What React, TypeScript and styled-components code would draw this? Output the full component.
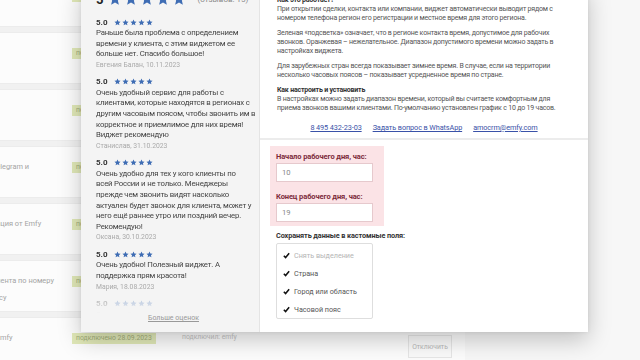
import styled, { createGlobalStyle } from "styled-components";

const GlobalStyle = createGlobalStyle`
  html, body { margin: 0; padding: 0; }
  body { font-family: Roboto, "Liberation Sans", sans-serif; }
`;

const rows = [
  { name: "Сделки" },
  { name: "Виджет чата" },
  { name: "Поиск дублей" },
  { name: "Отправка сообщений в Telegram и WhatsApp" },
  { name: "Виртуальная АТС: интеграция от Emfy" },
  { name: "Определение региона клиента по номеру телефона и часовому поясу" },
  { name: "Местное время клиента Emfy" },
];

const reviews = [
  {
    lines: [
      "Раньше была проблема с определением",
      "времени у клиента, с этим виджетом ее",
      "больше нет. Спасибо большое!",
    ],
    author: "Евгения Балан, 10.11.2023",
  },
  {
    lines: [
      "Очень удобный сервис для работы с",
      "клиентами, которые находятся в регионах с",
      "другим часовым поясом, чтобы звонить им в",
      "корректное и приемлимое для них время!",
      "Виджет рекомендую",
    ],
    author: "Станислав, 31.10.2023",
  },
  {
    lines: [
      "Очень удобно для тех у кого клиенты по",
      "всей России и не только. Менеджеры",
      "прежде чем звонить видят насколько",
      "актуален будет звонок для клиента, может у",
      "него ещё раннее утро или поздний вечер.",
      "Рекомендую!",
    ],
    author: "Оксана, 30.10.2023",
  },
  {
    lines: ["Очень удобно! Полезный виджет. А", "поддержка прям красота!"],
    author: "Мария, 18.08.2023",
  },
  {
    lines: ["Отличный виджет, всем советую."],
    author: "Алексей, 02.08.2023",
  },
];

const fields = [
  { label: "Снять выделение", muted: true },
  { label: "Страна" },
  { label: "Город или область" },
  { label: "Часовой пояс" },
];

const Page = styled.div`
  position: relative;
  width: 640px;
  height: 360px;
  overflow: hidden;
  background: #f7f7f7;
`;

const List = styled.div`
  display: flex;
  flex-direction: column;
  gap: 5px;
  width: 555px;
  margin: -25px 0 0 -90px;
  background: #f1f1f1;
`;

const Row = styled.div`
  display: grid;
  grid-template-columns: 152px 120px 226px 60px;
  align-items: start;
  height: 52px;
  box-sizing: border-box;
  padding-top: 11px;
  background: #fcfcfc;
  border-top: 1px solid #ececec;
  border-bottom: 1px solid #ececec;
  font-size: 7.4px;
  color: #a4a4a4;
`;

const RowName = styled.div`
  padding-right: 8px;
  line-height: 17px;
`;

const Tag = styled.span`
  justify-self: start;
  margin: 4px 0 0 10px;
  padding: 1px 4px;
  background: #e1e9b8;
  color: #a1ad78;
  font-size: 6.8px;
  line-height: 9px;
`;

const Installer = styled.span`
  margin-top: 4px;
  color: #c2c2c2;
  font-size: 6.8px;
`;

const OffButton = styled.button`
  margin-top: 6px;
  width: 44px;
  height: 23px;
  padding: 0;
  border: 1px solid #e6e6e6;
  background: #fafafa;
  color: #b8b8b8;
  font-family: inherit;
  font-size: 6.8px;
`;

const Modal = styled.div`
  position: absolute;
  left: 81px;
  top: -14px;
  width: 507px;
  height: 346px;
  display: grid;
  grid-template-columns: 179px 1fr;
  background: #fff;
  box-shadow: 0 8px 22px rgba(0, 0, 0, 0.22), 0 0 4px rgba(0, 0, 0, 0.08);
`;

const Side = styled.div`
  display: flex;
  flex-direction: column;
  padding: 2px 4px 0 15px;
  background: #f4f4f4;
  border-right: 1px solid #e4e4e4;
`;

const RatingHead = styled.div`
  display: flex;
  align-items: center;
  gap: 5px;
  height: 22px;
  margin-bottom: 7px;
`;

const BigScore = styled.span`
  font-size: 13px;
  font-weight: 700;
  color: #222;
`;

const Stars = styled.span<{ $size: number }>`
  display: inline-flex;
  gap: ${(p) => Math.round(p.$size * 0.12)}px;
`;

const ReviewsCount = styled.span`
  margin-left: 6px;
  font-size: 8px;
  color: #888;
`;

const ReviewList = styled.div`
  height: 296px;
  overflow: hidden;
  -webkit-mask-image: linear-gradient(to bottom, #000 276px, rgba(0, 0, 0, 0.28) 284px, transparent 296px);
  mask-image: linear-gradient(to bottom, #000 276px, rgba(0, 0, 0, 0.28) 284px, transparent 296px);
`;

const Review = styled.div`
  margin-bottom: 7px;
`;

const ReviewHead = styled.div`
  display: flex;
  align-items: center;
  gap: 6px;
  height: 10px;
  margin-bottom: 1px;
  font-size: 8px;
  font-weight: 700;
  color: #333;
`;

const ReviewText = styled.div`
  font-size: 7.8px;
  line-height: 10.6px;
  letter-spacing: -0.2px;
  color: #444;
  white-space: nowrap;
`;

const Line = styled.span`
  display: block;
`;

const ReviewAuthor = styled.div`
  font-size: 6.8px;
  line-height: 10px;
  color: #aaa;
`;

const MoreLink = styled.a`
  align-self: center;
  margin-right: 4px;
  font-size: 7px;
  line-height: 10px;
  color: #999;
  text-decoration: underline;
`;

const Main = styled.div`
  display: flex;
  flex-direction: column;
`;

const About = styled.div`
  padding: 10px 17px 6px;
  border-bottom: 2px solid #ececec;
  font-size: 7px;
  line-height: 9px;
  letter-spacing: -0.2px;
  color: #555;
`;

const AboutTitle = styled.div`
  font-weight: 700;
  color: #333;
`;

const AboutText = styled.p`
  margin: 0 0 6px;
  white-space: nowrap;
`;

const Contacts = styled.div`
  display: flex;
  justify-content: center;
  gap: 11px;
  margin-top: 10px;
  font-size: 7.3px;
  letter-spacing: -0.1px;
`;

const ContactLink = styled.a`
  color: #3a52a8;
  text-decoration: underline;
`;

const Settings = styled.div`
  display: flex;
  flex-direction: column;
  align-items: flex-start;
  padding: 6px 0 0 10px;
`;

const HoursBox = styled.div`
  width: 102px;
  padding: 6px 6px 4px;
  background: #fbe3e6;
`;

const HoursLabel = styled.div`
  font-size: 7.5px;
  line-height: 10px;
  letter-spacing: -0.1px;
  white-space: nowrap;
  font-weight: 700;
  color: #7c2a3b;
  margin-bottom: 1px;
`;

const HoursInput = styled.input`
  display: block;
  box-sizing: border-box;
  width: 97px;
  height: 19px;
  margin: 0 0 10px;
  padding: 0 5px;
  border: 1px solid #e6c9cd;
  background: #fff;
  font-family: inherit;
  font-size: 7.6px;
  color: #888;
  outline: none;

  &:last-child {
    margin-bottom: 0;
  }
`;

const FieldsTitle = styled.div`
  margin: 5px 0 2px 6px;
  font-size: 7.3px;
  line-height: 10px;
  letter-spacing: -0.1px;
  font-weight: 700;
  color: #333;
`;

const FieldsBox = styled.div`
  width: 97px;
  box-sizing: border-box;
  margin-left: 6px;
  padding: 2px 0 0;
  border: 1px solid #dedede;
  border-radius: 2px;
  background: #fff;
`;

const FieldItem = styled.div<{ $muted?: boolean }>`
  display: flex;
  align-items: center;
  gap: 4px;
  height: 18px;
  padding-left: 6px;
  font-size: 7.2px;
  color: ${(p) => (p.$muted ? "#b4b4b4" : "#555")};
`;

function StarRow({ size }: { size: number }) {
  return (
    <Stars $size={size}>
      {[0, 1, 2, 3, 4].map((i) => (
        <svg key={i} width={size} height={size} viewBox="0 0 24 24">
          <path
            d="M12 1.8l3.1 6.9 7.4.7-5.6 5 1.7 7.4L12 18l-6.6 3.8 1.7-7.4-5.6-5 7.4-.7z"
            fill="#3f6db4"
          />
        </svg>
      ))}
    </Stars>
  );
}

function Tick() {
  return (
    <svg width="7" height="7" viewBox="0 0 10 10">
      <path d="M1.2 5.4l2.5 2.6L8.8 1.8" stroke="#111" strokeWidth="2.2" fill="none" />
    </svg>
  );
}

export default function App() {
  return (
    <Page>
      <GlobalStyle />
      <List>
        {rows.map((row) => (
          <Row key={row.name}>
            <RowName>{row.name}</RowName>
            <Tag>подключено 28.09.2023</Tag>
            <Installer>подключил: emfy</Installer>
            <OffButton>Отключить</OffButton>
          </Row>
        ))}
      </List>

      <Modal>
        <Side>
          <RatingHead>
            <BigScore>5</BigScore>
            <StarRow size={14} />
            <ReviewsCount>(отзывов: 15)</ReviewsCount>
          </RatingHead>
          <ReviewList>
            {reviews.map((r) => (
              <Review key={r.author}>
                <ReviewHead>
                  5.0
                  <StarRow size={7} />
                </ReviewHead>
                <ReviewText>
                  {r.lines.map((l) => (
                    <Line key={l}>{l}</Line>
                  ))}
                </ReviewText>
                <ReviewAuthor>{r.author}</ReviewAuthor>
              </Review>
            ))}
          </ReviewList>
          <MoreLink>Больше оценок</MoreLink>
        </Side>

        <Main>
          <About>
            <AboutTitle>Как это работает?</AboutTitle>
            <AboutText>
              При открытии сделки, контакта или компании, виджет автоматически выводит рядом с
              <br />
              номером телефона регион его регистрации и местное время для этого региона.
            </AboutText>
            <AboutText>
              Зеленая «подсветка» означает, что в регионе контакта время, допустимое для рабочих
              <br />
              звонков. Оранжевая – нежелательное. Диапазон допустимого времени можно задать в
              <br />
              настройках виджета.
            </AboutText>
            <AboutText>
              Для зарубежных стран всегда показывает зимнее время. В случае, если на территории
              <br />
              несколько часовых поясов – показывает усредненное время по стране.
            </AboutText>
            <AboutTitle>Как настроить и установить</AboutTitle>
            <AboutText>
              В настройках можно задать диапазон времени, который вы считаете комфортным для
              <br />
              приема звонков вашими клиентами. По-умолчанию установлен график с 10 до 19 часов.
            </AboutText>
            <Contacts>
              <ContactLink>8 495 432-23-03</ContactLink>
              <ContactLink>Задать вопрос в WhatsApp</ContactLink>
              <ContactLink>amocrm@emfy.com</ContactLink>
            </Contacts>
          </About>

          <Settings>
            <HoursBox>
              <HoursLabel>Начало рабочего дня, час:</HoursLabel>
              <HoursInput defaultValue="10" />
              <HoursLabel>Конец рабочего дня, час:</HoursLabel>
              <HoursInput defaultValue="19" />
            </HoursBox>
            <FieldsTitle>Сохранять данные в кастомные поля:</FieldsTitle>
            <FieldsBox>
              {fields.map((f) => (
                <FieldItem key={f.label} $muted={f.muted}>
                  <Tick />
                  {f.label}
                </FieldItem>
              ))}
            </FieldsBox>
          </Settings>
        </Main>
      </Modal>
    </Page>
  );
}
